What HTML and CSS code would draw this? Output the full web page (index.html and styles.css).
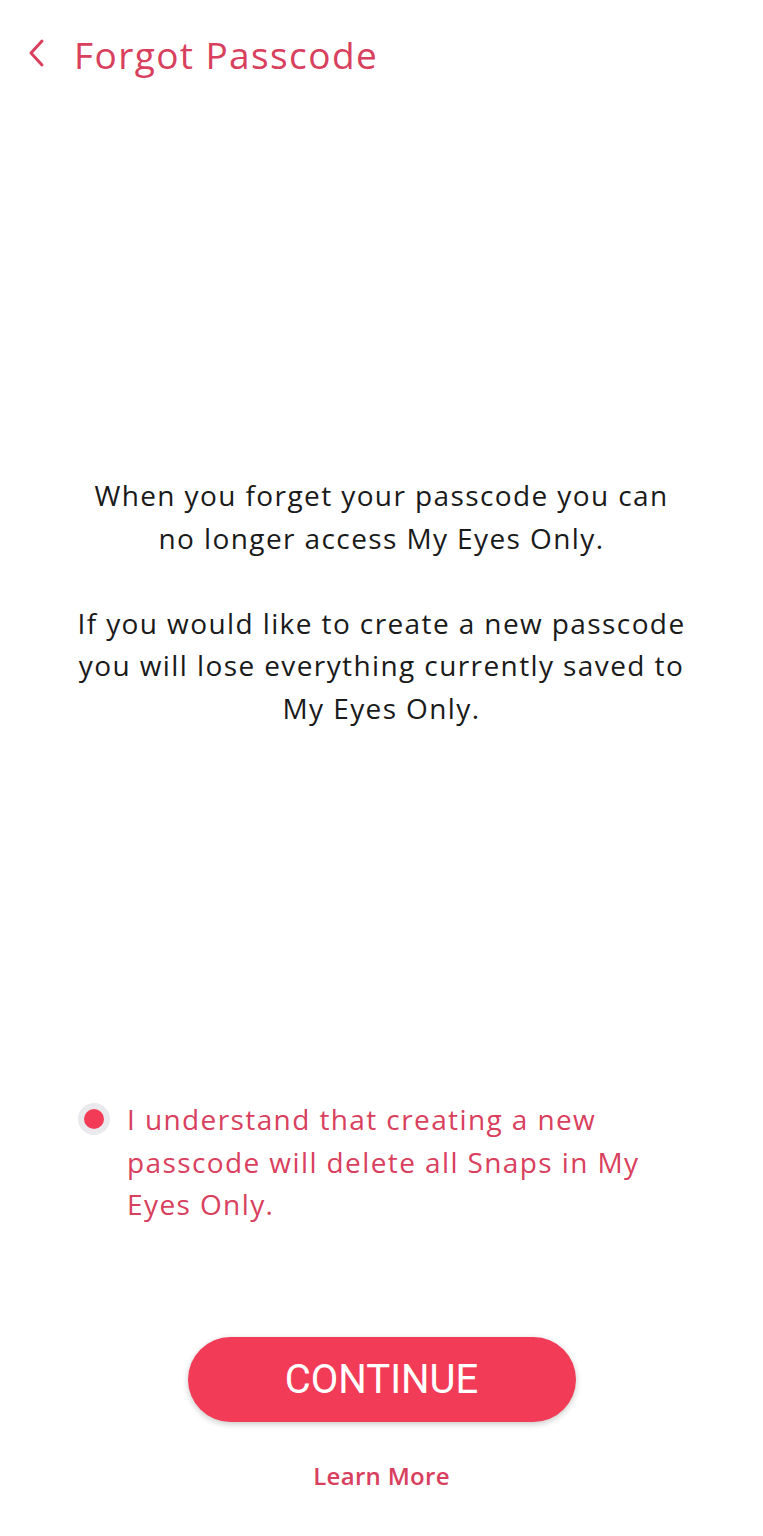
FILE: index.html
```html
<!DOCTYPE html>
<html>
<head>
<meta charset="utf-8">
<link rel="stylesheet" href="styles.css">
</head>
<body>
<div class="screen">
  <header class="header">
    <svg class="back" width="20" height="30" viewBox="0 0 20 30"><path d="M16 3 L5 15 L16 27" fill="none" stroke="#d9405e" stroke-width="3" stroke-linecap="round" stroke-linejoin="round"/></svg>
    <h1 class="title">Forgot Passcode</h1>
  </header>
  <main class="info">
    <p>When you forget your passcode you can<br>no longer access My Eyes Only.</p>
    <p>If you would like to create a new passcode<br>you will lose everything currently saved to<br>My Eyes Only.</p>
  </main>
  <div class="agree">
    <span class="radio"><span class="dot"></span></span>
    <p class="agree-text">I understand that creating a new<br>passcode will delete all Snaps in My<br>Eyes Only.</p>
  </div>
  <div class="actions">
    <button class="continue">CONTINUE</button>
    <a class="learn">Learn More</a>
  </div>
</div>
</body>
</html>
```
FILE: styles.css
```css
html, body { margin: 0; padding: 0; background: #fff; }
.screen { width: 763px; font-family: "Open Sans", "Noto Sans", sans-serif; }
.header { display: flex; align-items: center; height: 108px; padding-left: 26px; box-sizing: border-box; }
.back { margin-right: 28px; margin-top: -2px; }
.title { margin: 0; font-weight: 400; font-size: 37px; letter-spacing: 1.4px; color: #d9405e; }
.info { margin-top: 366px; text-align: center; color: #1a1a1a; font-size: 28px; letter-spacing: 1.4px; line-height: 42.5px; }
.info p { margin: 0 0 42.5px 0; }
.info p:last-child { margin-bottom: 0; }
.agree { display: flex; align-items: flex-start; margin-top: 369px; padding-left: 78px; }
.radio { width: 32px; height: 32px; border-radius: 50%; background: #e9e9ee; display: flex; align-items: center; justify-content: center; margin-top: 5px; flex-shrink: 0; }
.dot { width: 20px; height: 20px; border-radius: 50%; background: #f23c57; }
.agree-text { margin: 0 0 0 17px; font-size: 28px; letter-spacing: 1.4px; line-height: 42.5px; color: #d9405e; }
.actions { display: flex; flex-direction: column; align-items: center; margin-top: 111px; }
.continue { width: 388px; height: 85px; border: none; border-radius: 43px; background: #f23c57; color: #fff; font-family: Roboto, sans-serif; font-size: 40px; font-weight: 400; box-shadow: 0 2px 6px rgba(0,0,0,0.22); padding: 0; }
.learn { margin-top: 37px; font-size: 24px; font-weight: 600; color: #d9405e; letter-spacing: 0.3px; }
```
